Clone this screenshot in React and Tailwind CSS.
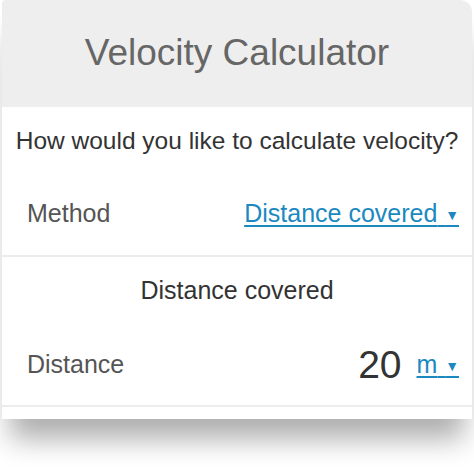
import React from 'react';

const Caret = () => (
    <span className="text-[14px] align-[2px]">{'\u00a0\u00a0'}▼</span>
);

export default function App() {
    return (
        <div className="w-[474px] h-[474px] bg-white overflow-hidden" style={{ fontFamily: '"Liberation Sans", Arial, sans-serif' }}>
            <div className="ml-[2px] w-[470px] rounded-tr-[12px] rounded-tl-[4px] shadow-[0_28px_28px_-8px_rgba(0,0,0,0.32)]">
                {/* Header */}
                <div className="h-[107px] bg-[#eeeeee] rounded-tr-[12px] rounded-tl-[4px] flex items-center justify-center">
                    <h1 className="text-[37px] text-[#666] pb-[2px]">Velocity Calculator</h1>
                </div>

                {/* Method section */}
                <div className="bg-white border-b-2 border-[#ececec] h-[150px]">
                    <p className="text-[24.5px] text-[#333] text-center pt-[20px] leading-[28px]">How would you like to calculate velocity?</p>
                    <div className="flex items-center justify-between pl-[25px] pr-[13px] mt-[45px] h-[28px]">
                        <span className="text-[25px] text-[#555]">Method</span>
                        <span className="text-[25px] text-[#1b89bf] underline underline-offset-[3px] decoration-[1.5px]">
                            Distance covered<Caret />
                        </span>
                    </div>
                </div>

                {/* Distance section */}
                <div className="bg-white border-b-2 border-[#ececec] h-[150px]">
                    <p className="text-[25px] text-[#333] text-center pt-[19px] leading-[28px]">Distance covered</p>
                    <div className="flex items-center justify-between pl-[25px] pr-[13px] mt-[42px] h-[38px]">
                        <span className="text-[25px] text-[#555]">Distance</span>
                        <div className="flex items-center">
                            <span className="text-[39px] text-[#333] mr-[15px] leading-[38px]">20</span>
                            <span className="text-[25px] text-[#1b89bf] underline underline-offset-[3px] decoration-[1.5px]">
                                m<Caret />
                            </span>
                        </div>
                    </div>
                </div>

                <div className="h-[12px] bg-white" />
            </div>
        </div>
    );
}
